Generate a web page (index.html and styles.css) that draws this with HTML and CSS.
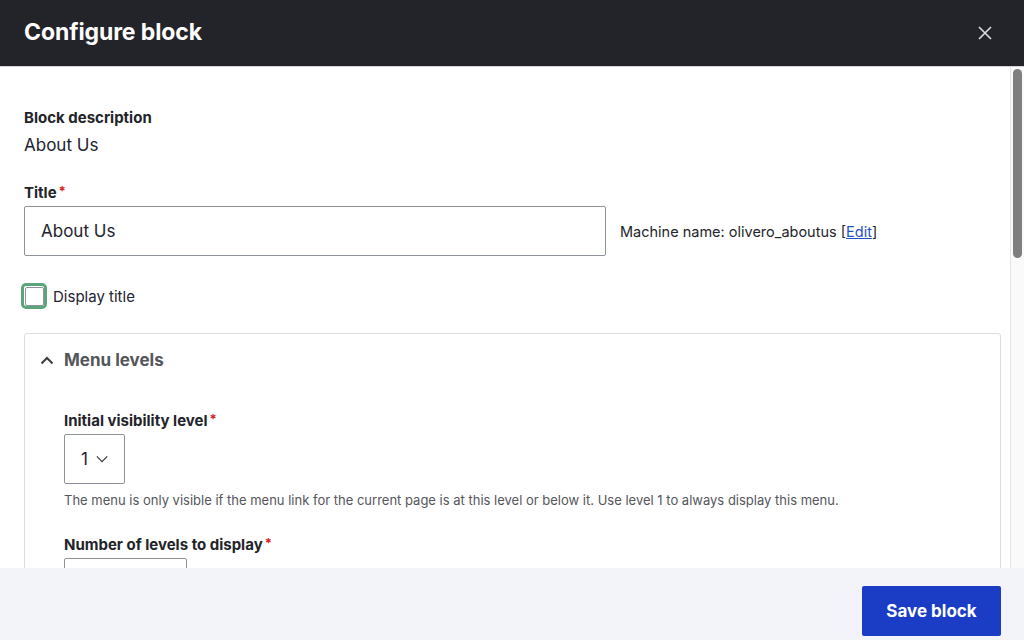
FILE: index.html
```html
<!DOCTYPE html>
<html lang="en">
<head>
<meta charset="utf-8">
<title>Configure block</title>
<link rel="stylesheet" href="styles.css">
</head>
<body>
<div class="dialog">
  <header class="dialog-header">
    <h1 class="dialog-title">Configure block</h1>
    <button class="close" aria-label="Close">
      <svg width="14" height="14" viewBox="0 0 14 14"><path d="M1 1 L13 13 M13 1 L1 13" stroke="#d8d9dc" stroke-width="1.7" fill="none"/></svg>
    </button>
  </header>
  <main class="dialog-body">
    <div class="form">
      <div class="item">
        <div class="label">Block description</div>
        <div class="value">About Us</div>
      </div>
      <div class="item title-item">
        <div class="label">Title<span class="req">*</span></div>
        <div class="title-row">
          <div class="text-input">About Us</div>
          <div class="machine">Machine name: olivero_aboutus [<a href="#">Edit</a>]</div>
        </div>
      </div>
      <div class="check-row">
        <span class="checkbox"><span class="checkbox-inner"></span></span>
        <span class="check-label">Display title</span>
      </div>
      <div class="details">
        <div class="summary">
          <svg class="chev" width="14" height="9" viewBox="0 0 14 9"><path d="M1.5 7.5 L7 2 L12.5 7.5" stroke="#3b3c40" stroke-width="2" fill="none"/></svg>
          <span>Menu levels</span>
        </div>
        <div class="details-content">
          <div class="field">
            <div class="label">Initial visibility level<span class="req">*</span></div>
            <div class="select small"><span>1</span>
              <svg width="14" height="8" viewBox="0 0 14 8"><path d="M1 1 L7 7 L13 1" stroke="#3b3c40" stroke-width="1.4" fill="none"/></svg>
            </div>
            <div class="desc">The menu is only visible if the menu link for the current page is at this level or below it. Use level 1 to always display this menu.</div>
          </div>
          <div class="field">
            <div class="label">Number of levels to display<span class="req">*</span></div>
            <div class="select wide"></div>
          </div>
        </div>
      </div>
    </div>
    <div class="scrollbar"><div class="thumb"></div></div>
  </main>
  <footer class="dialog-footer">
    <button class="save">Save block</button>
  </footer>
</div>
</body>
</html>
```
FILE: styles.css
```css
* { box-sizing: border-box; }
html, body { margin: 0; padding: 0; }
body {
  font-family: Inter, "Noto Sans", "Liberation Sans", sans-serif;
  color: #222330;
  background: #fff;
}
.dialog {
  width: 1024px;
  height: 640px;
  display: flex;
  flex-direction: column;
  overflow: hidden;
}
.dialog-header {
  height: 67px;
  flex: none;
  background: #232429;
  border-bottom: 1px solid #d3d4d9;
  display: flex;
  align-items: center;
  justify-content: space-between;
  padding: 0 32px 0 24px;
}
.dialog-title {
  margin: 0;
  color: #fff;
  font-size: 23px;
  font-weight: 700;
  letter-spacing: -0.1px;
  padding-bottom: 2px;
}
.close {
  background: none;
  border: 0;
  padding: 0;
  width: 14px;
  height: 14px;
  display: flex;
}
.dialog-body {
  flex: 1;
  min-height: 0;
  display: flex;
  background: #fff;
  overflow: hidden;
}
.form {
  flex: 1;
  min-width: 0;
  padding: 41px 9px 0 24px;
}
.scrollbar {
  flex: none;
  width: 14px;
  background: #fafafa;
  border-left: 1px solid #e4e4e4;
  padding: 2px 2px 0 2px;
}
.thumb {
  height: 189px;
  background: #7f7f7f;
  border-radius: 5px;
}
.label {
  font-size: 15px;
  font-weight: 700;
  line-height: 20px;
  color: #232429;
}
.req {
  color: #d72222;
  margin-left: 2px;
  font-size: 13px;
  vertical-align: 2px;
}
.value {
  font-size: 17px;
  line-height: 20px;
  margin-top: 7px;
}
.title-item { margin-top: 26px; }
.title-row {
  display: flex;
  align-items: center;
  margin-top: 3px;
}
.text-input {
  width: 582px;
  height: 50px;
  border: 1px solid #8e929c;
  border-radius: 2px;
  padding: 0 16px;
  font-size: 17px;
  line-height: 48px;
}
.machine {
  margin-left: 14px;
  font-size: 14.5px;
  color: #232429;
}
.machine a { color: #1d4fc8; }
.check-row {
  display: flex;
  align-items: center;
  margin: 27px 0 0 -3px;
  height: 26px;
}
.checkbox {
  width: 26px;
  height: 26px;
  border: 3px solid #5aa579;
  border-radius: 5px;
  display: flex;
  align-items: center;
  justify-content: center;
}
.checkbox-inner {
  width: 19px;
  height: 19px;
  border: 1px solid #8e929c;
  border-radius: 2px;
  background: #fff;
}
.check-label {
  margin-left: 6px;
  font-size: 15px;
}
.details {
  margin-top: 24px;
  border: 1px solid #dcdde2;
  border-radius: 3px;
  height: 600px;
}
.summary {
  height: 52px;
  display: flex;
  align-items: center;
  padding-left: 15px;
  font-size: 17px;
  font-weight: 700;
  color: #55565b;
}
.chev { margin-right: 10px; }
.details-content {
  padding: 23px 16px 20px 39px;
}
.field { margin-bottom: 24px; }
.select {
  margin-top: 3px;
  height: 50px;
  border: 1px solid #8e929c;
  border-radius: 2px;
  display: flex;
  align-items: center;
  font-size: 17px;
  padding: 0 16px;
  gap: 8px;
}
.select.small { width: 61px; }
.select.wide { width: 123px; }
.desc {
  margin-top: 8px;
  font-size: 13px;
  line-height: 17px;
  color: #55565b;
}
.dialog-footer {
  flex: none;
  height: 72px;
  background: #f3f4f9;
  display: flex;
  justify-content: flex-end;
  align-items: flex-start;
  padding: 18px 23px 0 0;
}
.save {
  width: 139px;
  height: 50px;
  background: #1b3dc5;
  color: #fff;
  border: 0;
  border-radius: 2px;
  font-family: inherit;
  font-size: 17px;
  font-weight: 700;
}
```
